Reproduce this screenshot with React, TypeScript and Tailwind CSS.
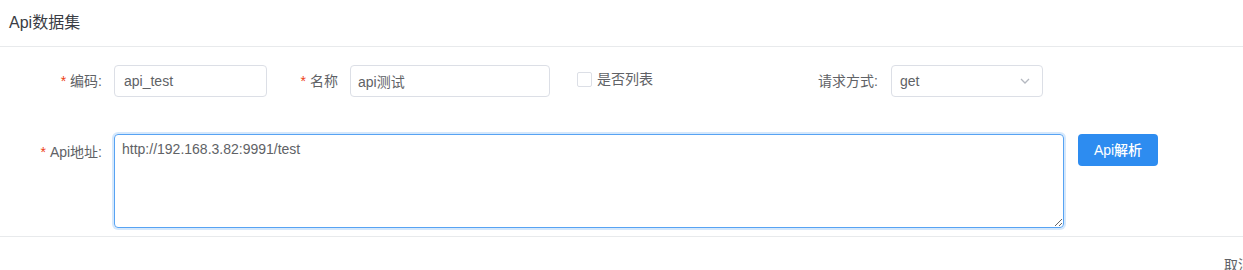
import React from "react";

const font = {
  fontFamily: '"Liberation Sans", "Noto Sans CJK SC", sans-serif',
};

function Req() {
  return <span className="mr-1 text-[#ed4014]">*</span>;
}

export default function App() {
  return (
    <div className="w-[1243px] h-[270px] overflow-hidden bg-white" style={font}>
      <div className="w-[1400px]">
        {/* header */}
        <div className="h-[47px] border-b border-[#e8eaec] flex items-center pl-[9px]">
          <span className="text-[16px] text-[#3a3d44]">Api数据集</span>
        </div>

        {/* body */}
        <div className="pt-[18px] pb-2 border-b border-[#e8eaec] text-[14px] text-[#606266]">
          <div className="flex items-center h-8">
            <label className="w-[114px] pr-3 text-right">
              <Req />
              编码:
            </label>
            <input
              className="w-[153px] h-8 rounded border border-[#dcdfe6] px-[9px] text-[#606266] outline-none"
              defaultValue="api_test"
            />
            <label className="w-[83px] pr-3 text-right">
              <Req />
              名称
            </label>
            <input
              className="w-[200px] h-8 rounded border border-[#dcdfe6] px-[7px] text-[#606266] outline-none"
              defaultValue="api测试"
            />
            <div className="ml-[27px] flex items-center gap-[5px] -mt-[3px]">
              <span className="w-[15px] h-[15px] rounded-[2px] border border-[#dcdfe6] bg-white" />
              <span>是否列表</span>
            </div>
            <label className="w-[238px] pr-[13px] text-right">请求方式:</label>
            <div className="w-[152px] h-8 rounded border border-[#dcdfe6] flex items-center justify-between pl-[8px] pr-[12px]">
              <span>get</span>
              <svg width="10" height="6" viewBox="0 0 10 6" fill="none">
                <path d="M1 1l4 4 4-4" stroke="#b4b8c0" strokeWidth="1.3" />
              </svg>
            </div>
          </div>

          <div className="flex items-start mt-[37px]">
            <label className="w-[114px] pr-3 text-right leading-[36px]">
              <Req />
              Api地址:
            </label>
            <textarea
              className="w-[950px] h-[94px] rounded border border-[#57a3f3] shadow-[0_0_0_2px_rgba(45,140,240,0.2)] px-[7px] py-[4px] leading-5 text-[#606266] outline-none"
              defaultValue="http://192.168.3.82:9991/test"
            />
            <button className="ml-[14px] w-[80px] h-8 rounded bg-[#2d8cf0] text-white font-medium">
              Api解析
            </button>
          </div>
        </div>

        {/* footer */}
        <div className="flex justify-end gap-[10px] pt-[12px] pr-[65px] text-[14px]">
          <button className="h-8 px-[15px] text-[#606266]">取消</button>
          <button className="h-8 px-[15px] rounded bg-[#2d8cf0] text-white">确定</button>
        </div>
      </div>
    </div>
  );
}
